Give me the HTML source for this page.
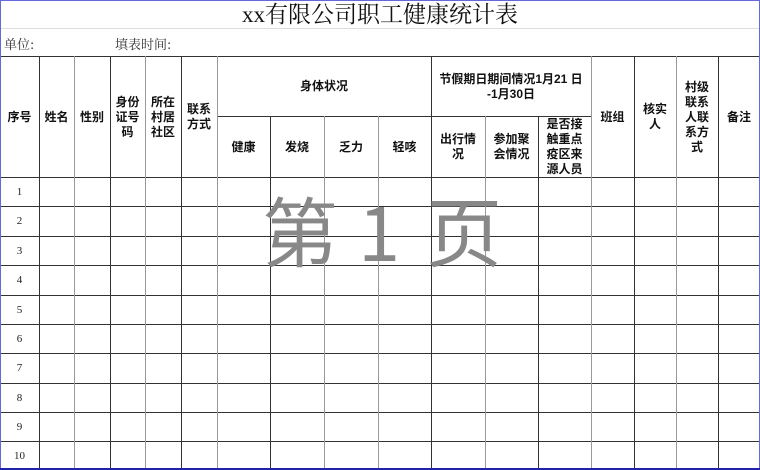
<!DOCTYPE html><html><head><meta charset="utf-8"><style>
body{margin:0;width:760px;height:470px;overflow:hidden;background:#fff;position:relative;font-family:"Liberation Sans","Noto Sans CJK SC",sans-serif}
.t{position:absolute;display:flex;align-items:center;justify-content:center;text-align:center;font-size:12px;font-weight:bold;color:#111;line-height:15px}
.n{position:absolute;font-size:11px;color:#222;text-align:center;width:39px;left:0;font-family:"Liberation Serif",serif}
.w{position:absolute;font-size:76px;color:#888;font-family:"Noto Sans CJK SC",sans-serif;line-height:1}
</style></head><body>
<svg width="760" height="470" style="position:absolute;left:0;top:0">
<g stroke="#ddd" stroke-width="1"><line x1="0" y1="28.5" x2="760" y2="28.5"/></g>
<g stroke="#333" stroke-width="1">
<line x1="0" y1="56.5" x2="760" y2="56.5"/>
<line x1="217" y1="116.5" x2="591" y2="116.5"/>
<line x1="0" y1="177.5" x2="760" y2="177.5"/>
<line x1="0" y1="206.5" x2="760" y2="206.5"/>
<line x1="0" y1="236.5" x2="760" y2="236.5"/>
<line x1="0" y1="265.5" x2="760" y2="265.5"/>
<line x1="0" y1="295.5" x2="760" y2="295.5"/>
<line x1="0" y1="324.5" x2="760" y2="324.5"/>
<line x1="0" y1="353.5" x2="760" y2="353.5"/>
<line x1="0" y1="383.5" x2="760" y2="383.5"/>
<line x1="0" y1="412.5" x2="760" y2="412.5"/>
<line x1="0" y1="441.5" x2="760" y2="441.5"/>
<line x1="39.5" y1="56" x2="39.5" y2="470"/>
<line x1="110.5" y1="56" x2="110.5" y2="470"/>
<line x1="181.5" y1="56" x2="181.5" y2="470"/>
<line x1="270.5" y1="116" x2="270.5" y2="470"/>
<line x1="431.5" y1="56" x2="431.5" y2="470"/>
<line x1="538.5" y1="116" x2="538.5" y2="470"/>
<line x1="634.5" y1="56" x2="634.5" y2="470"/>
<line x1="718.5" y1="56" x2="718.5" y2="470"/>
</g>
<g stroke="#999" stroke-width="1">
<line x1="74.5" y1="56" x2="74.5" y2="470"/>
<line x1="145.5" y1="56" x2="145.5" y2="470"/>
<line x1="217.5" y1="56" x2="217.5" y2="470"/>
<line x1="324.5" y1="116" x2="324.5" y2="470"/>
<line x1="378.5" y1="116" x2="378.5" y2="470"/>
<line x1="485.5" y1="116" x2="485.5" y2="470"/>
<line x1="591.5" y1="56" x2="591.5" y2="470"/>
<line x1="676.5" y1="56" x2="676.5" y2="470"/>
</g>
<rect x="0.5" y="0.5" width="759" height="469" fill="none" stroke="#6666dd"/>
<line x1="0" y1="469" x2="760" y2="469" stroke="#2222aa" stroke-width="2"/>
</svg>
<div style="position:absolute;left:0;top:2px;width:760px;text-align:center;font-size:23px;font-family:'Liberation Serif','Noto Serif CJK SC',serif;color:#111;line-height:26px">xx有限公司职工健康统计表</div>
<div style="position:absolute;left:4px;top:34px;font-size:13px;color:#333;font-family:'Noto Serif CJK SC',serif">单位:</div>
<div style="position:absolute;left:115px;top:34px;font-size:13px;color:#333;font-family:'Noto Serif CJK SC',serif">填表时间:</div>
<div class="t" style="left:0;top:57px;width:39px;height:120px">序号</div>
<div class="t" style="left:39px;top:57px;width:35px;height:120px">姓名</div>
<div class="t" style="left:74px;top:57px;width:36px;height:120px">性别</div>
<div class="t" style="left:110px;top:57px;width:35px;height:120px">身份<br>证号<br>码</div>
<div class="t" style="left:145px;top:57px;width:36px;height:120px">所在<br>村居<br>社区</div>
<div class="t" style="left:181px;top:57px;width:36px;height:120px">联系<br>方式</div>
<div class="t" style="left:217px;top:57px;width:214px;height:59px">身体状况</div>
<div class="t" style="left:431px;top:57px;width:160px;height:59px">节假期日期间情况1月21 日<br>-1月30日</div>
<div class="t" style="left:217px;top:117px;width:53px;height:60px">健康</div>
<div class="t" style="left:270px;top:117px;width:54px;height:60px">发烧</div>
<div class="t" style="left:324px;top:117px;width:54px;height:60px">乏力</div>
<div class="t" style="left:378px;top:117px;width:53px;height:60px">轻咳</div>
<div class="t" style="left:431px;top:117px;width:54px;height:60px">出行情<br>况</div>
<div class="t" style="left:485px;top:117px;width:53px;height:60px">参加聚<br>会情况</div>
<div class="t" style="left:538px;top:117px;width:53px;height:60px">是否接<br>触重点<br>疫区来<br>源人员</div>
<div class="t" style="left:591px;top:57px;width:43px;height:120px">班组</div>
<div class="t" style="left:634px;top:57px;width:42px;height:120px">核实<br>人</div>
<div class="t" style="left:676px;top:57px;width:42px;height:120px">村级<br>联系<br>人联<br>系方<br>式</div>
<div class="t" style="left:718px;top:57px;width:42px;height:120px">备注</div>
<div class="n" style="top:186px">1</div>
<div class="n" style="top:215px">2</div>
<div class="n" style="top:245px">3</div>
<div class="n" style="top:274px">4</div>
<div class="n" style="top:304px">5</div>
<div class="n" style="top:333px">6</div>
<div class="n" style="top:362px">7</div>
<div class="n" style="top:392px">8</div>
<div class="n" style="top:421px">9</div>
<div class="n" style="top:450px">10</div>
<div class="w" style="left:262px;top:190px">第</div>
<div class="w" style="left:358px;top:190px">1</div>
<div class="w" style="left:426px;top:190px">页</div>
</body></html>
